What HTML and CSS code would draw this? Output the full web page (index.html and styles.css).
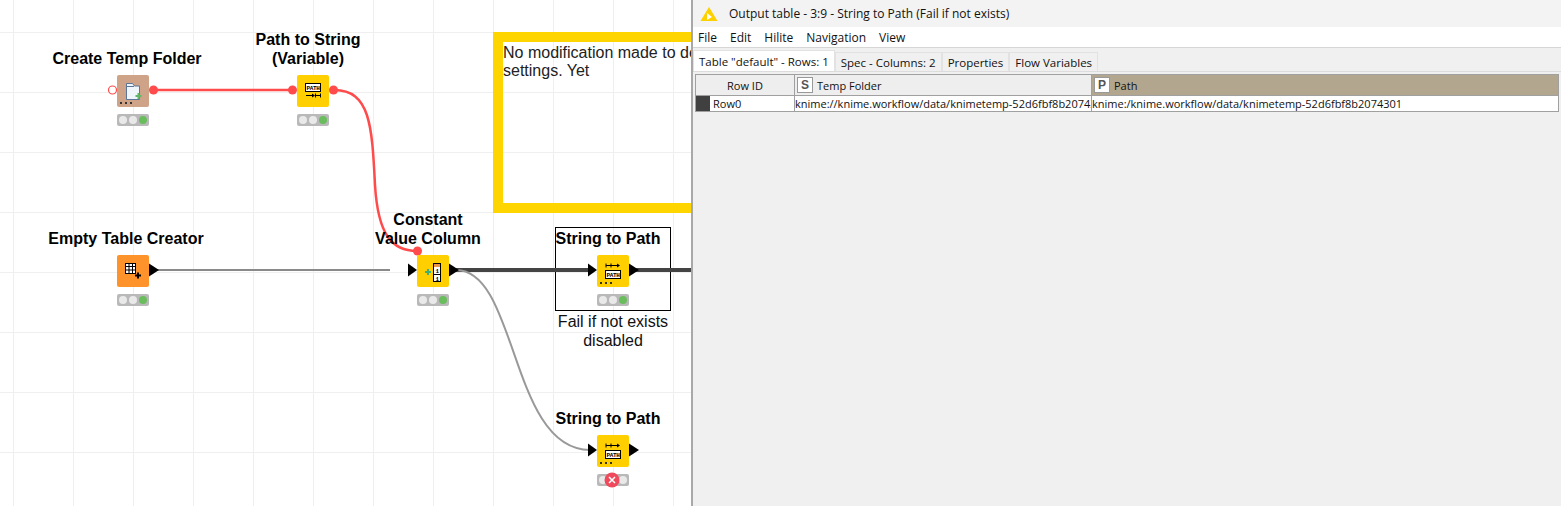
FILE: index.html
```html
<!DOCTYPE html>
<html lang="en">
<head>
    <meta charset="UTF-8">
    <meta name="viewport" content="width=device-width, initial-scale=1.0">
    <title>Output table - 3:9 - String to Path</title>
    <link rel="stylesheet" href="styles.css">
</head>
<body>
    <div class="workflow">
        <div class="annotation annotation-yellow">No modification made to default settings. Yet</div>
        <div class="annotation annotation-black"></div>

        <!-- connections and ports -->
        <svg class="wires" width="691" height="506" viewBox="0 0 691 506">
            <path class="wire-flow" d="M153 90H292"/>
            <path class="wire-flow" d="M334 90C370 90 372 125 375 185C378 235 392 251 417 251"/>
            <path class="wire-thin" d="M155 270H390"/>
            <path class="wire-data" d="M456 270H590"/>
            <path class="wire-data" d="M636 270H691"/>
            <path class="wire-gray" d="M456 270C518 270 510 450 590 450"/>

            <circle class="port-empty" cx="112.500" cy="90" r="4"/>
            <circle class="port-flow" cx="153.500" cy="90" r="4.500"/>
            <circle class="port-flow" cx="292.500" cy="90" r="4.500"/>
            <circle class="port-flow" cx="333.500" cy="90" r="4.500"/>
            <circle class="port-flow" cx="417.500" cy="251" r="4.500"/>

            <path d="M149 263.500L159 270L149 276.500Z"/>
            <path d="M408 263.500L417 270L408 276.500Z"/>
            <path d="M449 263.500L459 270L449 276.500Z"/>
            <path d="M588 263.500L597 270L588 276.500Z"/>
            <path d="M629 263.500L639 270L629 276.500Z"/>
            <path d="M588 443.500L597 450L588 456.500Z"/>
            <path d="M629 443.500L639 450L629 456.500Z"/>
        </svg>

        <div class="node-label label-temp">Create Temp Folder</div>
        <div class="node node-temp node-brown">
            <svg width="32" height="32" viewBox="0 0 32 32">
                <path d="M9.500 8.500H15.500L17.500 11H22.500V24.500H9.500Z" fill="#eef5fb" stroke="#5d7596"/>
                <path d="M9.500 11.500H17" stroke="#5d7596" fill="none"/>
                <path d="M18.500 21H24.500M21.500 18V24" stroke="#5fb86a" stroke-width="2"/>
                <g fill="#333"><rect x="3" y="27" width="2" height="2"/><rect x="8" y="27" width="2" height="2"/><rect x="13" y="27" width="2" height="2"/></g>
            </svg>
        </div>
        <div class="traffic traffic-temp"><i></i><i></i><i class="on"></i></div>

        <div class="node-label label-p2s">Path to String<br>(Variable)</div>
        <div class="node node-p2s node-yellow">
            <svg width="32" height="32" viewBox="0 0 32 32">
                <rect x="8.500" y="8.500" width="15" height="8" fill="#fff" stroke="#000"/>
                <text class="icon-text" x="16" y="15" text-anchor="middle">PATH</text>
                <path d="M9 20.500H16M18.500 18.500V22.500M23.500 18.500V22.500M18.500 20.500H23.500" stroke="#000" fill="none"/>
                <path d="M15 18.500L18 20.500L15 22.500Z"/>
            </svg>
        </div>
        <div class="traffic traffic-p2s"><i></i><i></i><i class="on"></i></div>

        <div class="node-label label-empty">Empty Table Creator</div>
        <div class="node node-empty node-orange">
            <svg width="32" height="32" viewBox="0 0 32 32">
                <rect x="8.500" y="8.500" width="10" height="10" fill="#fff" stroke="#000"/>
                <path d="M8.500 11.500H18.500M8.500 15H18.500M12 8.500V18.500M15.500 8.500V18.500" stroke="#000" fill="none"/>
                <path d="M18 20.500H24M21 17.500V23.500" stroke="#000" stroke-width="2"/>
            </svg>
        </div>
        <div class="traffic traffic-empty"><i></i><i></i><i class="on"></i></div>

        <div class="node-label label-const">Constant<br>Value Column</div>
        <div class="node node-const node-yellow">
            <svg width="32" height="32" viewBox="0 0 32 32">
                <path d="M8 17H14M11 14V20" stroke="#3fae7a" stroke-width="2"/>
                <rect x="16.500" y="8.500" width="7" height="18" fill="#fff" stroke="#000"/>
                <rect x="17" y="9" width="6" height="3" fill="#e8964a"/>
                <path d="M16.500 19.500H23.500" stroke="#000"/>
                <text class="icon-text" x="20" y="18" text-anchor="middle">1</text>
                <text class="icon-text" x="20" y="26" text-anchor="middle">1</text>
            </svg>
        </div>
        <div class="traffic traffic-const"><i></i><i></i><i class="on"></i></div>

        <div class="node-label label-s2p">String to Path</div>
        <div class="node node-s2p node-yellow">
            <svg width="32" height="32" viewBox="0 0 32 32">
                <path d="M9 8.500V12.500M14 8.500V12.500M9 10.500H21" stroke="#000" fill="none"/>
                <path d="M20 8.500L23 10.500L20 12.500Z"/>
                <rect x="8.500" y="15.500" width="15" height="8" fill="#fff" stroke="#000"/>
                <text class="icon-text" x="16" y="22" text-anchor="middle">PATH</text>
                <g fill="#333"><rect x="3" y="27" width="2" height="2"/><rect x="8" y="27" width="2" height="2"/><rect x="13" y="27" width="2" height="2"/></g>
            </svg>
        </div>
        <div class="traffic traffic-s2p"><i></i><i></i><i class="on"></i></div>
        <div class="node-note note-s2p">Fail if not exists<br>disabled</div>

        <div class="node-label label-s2p2">String to Path</div>
        <div class="node node-s2p2 node-yellow">
            <svg width="32" height="32" viewBox="0 0 32 32">
                <path d="M9 8.500V12.500M14 8.500V12.500M9 10.500H21" stroke="#000" fill="none"/>
                <path d="M20 8.500L23 10.500L20 12.500Z"/>
                <rect x="8.500" y="15.500" width="15" height="8" fill="#fff" stroke="#000"/>
                <text class="icon-text" x="16" y="22" text-anchor="middle">PATH</text>
                <g fill="#333"><rect x="3" y="27" width="2" height="2"/><rect x="8" y="27" width="2" height="2"/><rect x="13" y="27" width="2" height="2"/></g>
            </svg>
        </div>
        <div class="traffic traffic-s2p2"><i></i><i></i><i></i></div>
        <svg class="error-badge" width="16" height="16" viewBox="0 0 16 16">
            <circle cx="8" cy="8" r="7.500" fill="#ee4a5c"/>
            <path d="M5 5L11 11M11 5L5 11" stroke="#fff" stroke-width="1.500"/>
        </svg>
    </div>

    <div class="window">
        <div class="title-bar">
            <svg width="18" height="16" viewBox="0 0 18 16">
                <path d="M9 1L17.500 15H0.500Z" fill="#fdd000"/>
                <path d="M7 7L12 11L7 14Z" fill="#fff"/>
            </svg>
            <span>Output table - 3:9 - String to Path (Fail if not exists)</span>
        </div>
        <div class="menu-bar">
            <span>File</span><span>Edit</span><span>Hilite</span><span>Navigation</span><span>View</span>
        </div>
        <div class="tabs">
            <div class="tab tab-active">Table "default" - Rows: 1</div>
            <div class="tab">Spec - Columns: 2</div>
            <div class="tab">Properties</div>
            <div class="tab">Flow Variables</div>
        </div>
        <div class="data-table">
            <div class="table-row header-row">
                <div class="cell col-id head-id">Row ID</div>
                <div class="cell col-temp"><b class="type-box">S</b>Temp Folder</div>
                <div class="cell col-path head-path"><b class="type-box">P</b>Path</div>
            </div>
            <div class="table-row body-row">
                <div class="cell col-id"><i class="row-mark"></i>Row0</div>
                <div class="cell col-temp">knime://knime.workflow/data/knimetemp-52d6fbf8b2074301</div>
                <div class="cell col-path">knime:/knime.workflow/data/knimetemp-52d6fbf8b2074301</div>
            </div>
        </div>
    </div>
</body>
</html>
```

FILE: styles.css
```css
html, body {
    margin: 0;
    height: 506px;
    overflow: hidden;
    background: #fff;
}

/* workflow canvas */
.workflow {
    position: absolute;
    left: 0;
    top: 0;
    width: 691px;
    height: 506px;
    overflow: hidden;
    font-family: "Liberation Sans", Arial, sans-serif;
    background-color: #fff;
    background-image:
        linear-gradient(to right, #efefef 1px, transparent 1px),
        linear-gradient(to bottom, #efefef 1px, transparent 1px);
    background-size: 60px 60px;
    background-position: 13px 32px;
}

.wires {
    position: absolute;
    left: 0;
    top: 0;
}

.wire-flow { fill: none; stroke: #ff4b4b; stroke-width: 2.5; }
.wire-thin { fill: none; stroke: #8a8a8a; stroke-width: 2; }
.wire-data { fill: none; stroke: #444; stroke-width: 4; }
.wire-gray { fill: none; stroke: #999; stroke-width: 2; }
.port-flow { fill: #ff4b4b; stroke: none; }
.port-empty { fill: #fff; stroke: #ff4b4b; stroke-width: 1.2; }

.annotation {
    position: absolute;
    box-sizing: border-box;
}

.annotation-yellow {
    left: 493px;
    top: 32px;
    width: 300px;
    height: 181px;
    padding: 2px 0 0 0;
    border: 10px solid #ffd500;
    font-size: 16px;
    line-height: 18px;
    color: #222;
}

.annotation-black {
    left: 555px;
    top: 227px;
    width: 116px;
    height: 84px;
    border: 1px solid #000;
}

.node {
    position: absolute;
    width: 32px;
    height: 32px;
    border-radius: 2px;
}

.node svg { display: block; }
.node-brown { background: #cfa387; }
.node-yellow { background: #ffcf00; }
.node-orange { background: #ff932b; }

.icon-text {
    font-family: "Liberation Mono", monospace;
    font-size: 6px;
    font-weight: bold;
    letter-spacing: -0.4px;
}

.node-temp { left: 117px; top: 75px; }
.node-p2s { left: 297px; top: 75px; }
.node-empty { left: 117px; top: 255px; }
.node-const { left: 417px; top: 255px; }
.node-s2p { left: 597px; top: 255px; }
.node-s2p2 { left: 597px; top: 435px; }

.traffic {
    position: absolute;
    display: flex;
    align-items: center;
    justify-content: space-between;
    box-sizing: border-box;
    width: 32px;
    height: 12px;
    padding: 0 2px;
    border-radius: 2px;
    background: #b9b9b9;
}

.traffic i {
    width: 8px;
    height: 8px;
    border-radius: 50%;
    background: #e9e9e9;
}

.traffic i.on { background: #69bd5c; }

.traffic-temp { left: 117px; top: 114px; }
.traffic-p2s { left: 297px; top: 114px; }
.traffic-empty { left: 117px; top: 294px; }
.traffic-const { left: 417px; top: 294px; }
.traffic-s2p { left: 597px; top: 294px; }
.traffic-s2p2 { left: 597px; top: 474px; }

.error-badge {
    position: absolute;
    left: 604px;
    top: 472px;
}

.node-label {
    position: absolute;
    width: 200px;
    font-size: 16px;
    font-weight: bold;
    line-height: 19px;
    text-align: center;
    color: #000;
}

.node-note {
    position: absolute;
    width: 200px;
    font-size: 16px;
    line-height: 19px;
    text-align: center;
    color: #111;
}

.label-temp { left: 27px; top: 49px; }
.label-p2s { left: 208px; top: 30px; }
.label-empty { left: 26px; top: 229px; }
.label-const { left: 328px; top: 210px; }
.label-s2p { left: 508px; top: 229px; }
.label-s2p2 { left: 508px; top: 409px; }
.note-s2p { left: 513px; top: 312px; }

/* output table window */
.window {
    position: absolute;
    left: 691px;
    top: 0;
    width: 870px;
    height: 506px;
    box-sizing: border-box;
    display: flex;
    flex-direction: column;
    border-left: 2px solid #a8a8a8;
    background: #f0f0f0;
    font-family: "Open Sans", "Liberation Sans", sans-serif;
    font-size: 12px;
    color: #111;
}

.title-bar {
    display: flex;
    align-items: center;
    gap: 11px;
    height: 27px;
    padding-left: 7px;
    background: #f3f3f3;
}

.menu-bar {
    display: flex;
    gap: 13px;
    align-items: center;
    height: 21px;
    padding-left: 5px;
    background: #fff;
    border-bottom: 1px solid #d6d6d6;
    box-sizing: border-box;
}

.tabs {
    display: flex;
    align-items: flex-end;
    height: 24px;
    padding-left: 0;
    border-bottom: 1px solid #dcdcdc;
    box-sizing: border-box;
    white-space: nowrap;
    font-size: 11.500px;
}

.tab {
    display: flex;
    align-items: center;
    height: 19px;
    padding: 0 5px;
    border: 1px solid #e2e2e2;
    border-bottom: none;
    box-sizing: border-box;
    background: #f0f0f0;
}

.tab-active {
    height: 21px;
    background: #fff;
}

.data-table {
    margin: 2px 2px 0 2px;
    font-size: 11px;
}

.table-row {
    display: flex;
    box-sizing: border-box;
}

.header-row {
    height: 22px;
    background: #eeeeee;
    border: 1px solid #a0a0a0;
}

.body-row {
    height: 16px;
    background: #fff;
    border: 1px solid #a0a0a0;
    border-top: none;
}

.cell {
    display: flex;
    align-items: center;
    box-sizing: border-box;
    overflow: hidden;
    white-space: nowrap;
    border-right: 1px solid #a0a0a0;
}

.cell:last-child { border-right: none; }
.col-id { width: 99px; }
.col-temp { width: 297px; }
.col-path { flex: 1; }
.head-id { justify-content: center; }
.head-path { background: #b3a68f; }

.type-box {
    display: flex;
    align-items: center;
    justify-content: center;
    width: 14px;
    height: 14px;
    margin: 0 4px 0 2px;
    border: 1px solid #999;
    background: #fff;
    font-family: "Liberation Sans", sans-serif;
    font-size: 12px;
    color: #555;
}

.row-mark {
    width: 14px;
    height: 15px;
    margin-right: 3px;
    background: #404040;
}
```
